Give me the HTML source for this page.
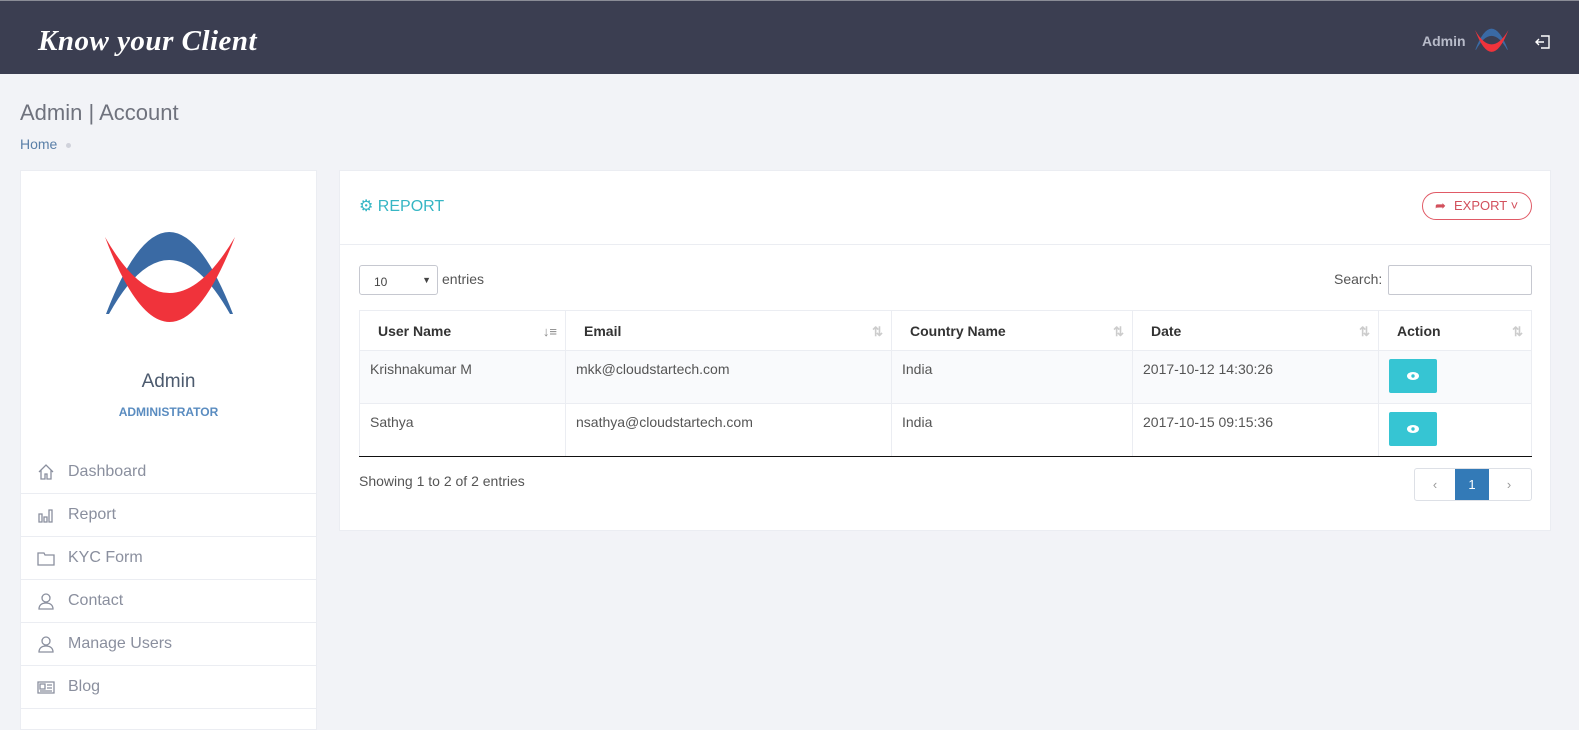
<!DOCTYPE html>
<html><head><meta charset="utf-8"><style>
*{box-sizing:border-box;margin:0;padding:0}
body{width:1579px;height:716px;overflow:hidden;background:#f2f3f7;font-family:"Liberation Sans",sans-serif;color:#575962;position:relative}
.top{position:absolute;left:0;top:0;width:1579px;height:74px;background:#3b3e51;border-top:1px solid #8a8c96}
.brand{position:absolute;left:38px;top:24px;color:#fff;font-family:"Liberation Serif",serif;font-weight:bold;font-size:29px;letter-spacing:0.5px;font-style:italic}
.admin{position:absolute;left:1422px;top:32px;color:#b8bbc9;font-size:14px;font-weight:bold}
.pt{position:absolute;left:20px;top:100px;font-size:22px;color:#6f727d}
.bc{position:absolute;left:20px;top:136px;font-size:14px;color:#5a7fa8}
.bc span{display:inline-block;width:5px;height:5px;border-radius:50%;background:#d0d2db;margin-left:9px;vertical-align:middle}
.side{position:absolute;left:20px;top:170px;width:297px;height:560px;background:#fff;border:1px solid #ebedf2}
.side .nm{position:absolute;top:200px;width:100%;text-align:center;font-size:19px;color:#4c5a6e}
.side .rl{position:absolute;top:234px;width:100%;text-align:center;font-size:12px;font-weight:bold;color:#5a8cc0}
.menu{position:absolute;top:280px;left:0;width:295px}
.menu div{height:43px;border-bottom:1px solid #ebedf2;font-size:16px;color:#8a8f9e;padding-left:47px;line-height:41px;position:relative}
.menu svg{position:absolute;left:16px;top:12px}
.card{position:absolute;left:339px;top:170px;width:1212px;height:361px;background:#fff;border:1px solid #ebedf2}
.ch{height:74px;border-bottom:1px solid #ebedf2;position:relative}
.rep{position:absolute;left:19px;top:25px;color:#36b6c4;font-size:16px}
.exp{position:absolute;left:1082px;top:21px;width:110px;height:28px;border:1px solid #e05a66;border-radius:14px;color:#d2505c;font-size:13px;line-height:26px;padding-left:31px}
.sel{position:absolute;left:19px;top:94px;width:79px;height:30px;border:1px solid #c6c8d0;border-radius:3px;font-size:12px;padding:9px 14px;color:#444}
.ent{position:absolute;left:102px;top:100px;font-size:14px;color:#555}
.srch{position:absolute;left:994px;top:100px;font-size:14px;color:#555}
.sbox{position:absolute;left:1048px;top:94px;width:144px;height:30px;border:1px solid #c6c8d0;border-radius:2px}
table{position:absolute;left:19px;top:139px;width:1173px;border-collapse:collapse;font-size:14px}
th{height:40px;text-align:left;font-weight:bold;color:#333;border:1px solid #ebedf2;padding-left:18px;position:relative}
th i{position:absolute;right:8px;top:13px;font-style:normal;color:#ccc;font-size:13px}
td{height:51px;vertical-align:top;padding:10px 10px;color:#555;border-left:1px solid #ebedf2;border-right:1px solid #ebedf2;border-top:1px solid #ebedf2}
tr.a td{background:#f9fafc}
tr.last td{border-bottom:1px solid #111}
.eye{width:48px;height:34px;background:#36c5d3;border-radius:2px;margin-top:-2px;display:flex;align-items:center;justify-content:center}
.show{position:absolute;left:19px;top:302px;font-size:14px;color:#555}
.pg{position:absolute;left:1074px;top:297px;height:33px;width:118px;border:1px solid #dde0e6;border-radius:3px;display:flex}
.pg div{width:40px;text-align:center;line-height:31px;color:#999;font-size:13px}
.pg .on{background:#337ab7;color:#fff;width:34px}
</style></head><body>
<div class="top">
<div class="brand">Know your Client</div>
<div class="admin">Admin</div>
<svg style="position:absolute;left:1474px;top:25px" width="36" height="28" viewBox="100 225 140 100"><path d="M105,313 Q168,149 232,313 L229,313 Q168,205 108,313Z" fill="#3a6aa4"/><path d="M104,236 Q168,406 234,236 Q168,348 104,236Z" fill="#f0333b"/></svg>
<svg style="position:absolute;left:1535px;top:33px" width="16" height="16" viewBox="0 0 16 16" fill="none" stroke="#fff" stroke-width="1.4"><path d="M6 2h8v12H6M1 8h8M4 5L1 8l3 3"/></svg>
</div>
<div class="pt">Admin | Account</div>
<div class="bc">Home<span></span></div>
<div class="side">
<svg style="position:absolute;left:84px;top:60px" width="130" height="92" viewBox="104 230 130 92"><path d="M105,313 Q168,149 232,313 L229,313 Q168,205 108,313Z" fill="#3a6aa4"/><path d="M104,236 Q168,406 234,236 Q168,348 104,236Z" fill="#f0333b"/></svg>
<div class="nm">Admin</div><div class="rl">ADMINISTRATOR</div>
<div class="menu">
<div><svg width="18" height="18" viewBox="0 0 18 18" fill="none" stroke="#8a8f9e" stroke-width="1.3"><path d="M2 9L9 2l7 7M4 7v9h4v-5h2v5h4V7"/></svg>Dashboard</div>
<div><svg width="18" height="18" viewBox="0 0 18 18" fill="none" stroke="#8a8f9e" stroke-width="1.3"><path d="M2 8h3v8H2zM7 11h3v5H7zM12 4h3v12h-3z"/></svg>Report</div>
<div><svg width="18" height="18" viewBox="0 0 18 18" fill="none" stroke="#8a8f9e" stroke-width="1.3"><path d="M1 4h6l1 2h9v10H1z"/></svg>KYC Form</div>
<div><svg width="18" height="18" viewBox="0 0 18 18" fill="none" stroke="#8a8f9e" stroke-width="1.3"><circle cx="9" cy="6" r="4"/><path d="M2 17c0-4 3-6 7-6s7 2 7 6z"/></svg>Contact</div>
<div><svg width="18" height="18" viewBox="0 0 18 18" fill="none" stroke="#8a8f9e" stroke-width="1.3"><circle cx="9" cy="6" r="4"/><path d="M2 17c0-4 3-6 7-6s7 2 7 6z"/></svg>Manage Users</div>
<div><svg width="18" height="18" viewBox="0 0 18 18" fill="none" stroke="#8a8f9e" stroke-width="1.3"><path d="M1 4h16v11H1zM3 6h5v5H3zM10 7h5M10 10h5M3 13h12"/></svg>Blog</div>
</div></div>
<div class="card">
<div class="ch"><div class="rep">⚙ REPORT</div><div class="exp"><span style="position:absolute;left:12px">➦</span>EXPORT ˅</div></div>
<div class="sel">10<span style="position:absolute;right:6px;font-size:9px;top:9px">▼</span></div><div class="ent">entries</div>
<div class="srch">Search:</div><div class="sbox"></div>
<table>
<tr><th style="width:206px">User Name<i style="color:#888">↓≡</i></th><th style="width:326px">Email<i>⇅</i></th><th style="width:241px">Country Name<i>⇅</i></th><th style="width:246px">Date<i>⇅</i></th><th>Action<i>⇅</i></th></tr>
<tr class="a"><td>Krishnakumar M</td><td>mkk@cloudstartech.com</td><td>India</td><td>2017-10-12 14:30:26</td><td><div class="eye"><svg width="12" height="8" viewBox="0 0 12 8"><ellipse cx="6" cy="4" rx="6" ry="4" fill="#fff"/><circle cx="6" cy="4" r="1.7" fill="#36c5d3"/></svg></div></td></tr>
<tr class="last"><td>Sathya</td><td>nsathya@cloudstartech.com</td><td>India</td><td>2017-10-15 09:15:36</td><td><div class="eye"><svg width="12" height="8" viewBox="0 0 12 8"><ellipse cx="6" cy="4" rx="6" ry="4" fill="#fff"/><circle cx="6" cy="4" r="1.7" fill="#36c5d3"/></svg></div></td></tr>
</table>
<div class="show">Showing 1 to 2 of 2 entries</div>
<div class="pg"><div>‹</div><div class="on">1</div><div>›</div></div>
</div>
</body></html>
